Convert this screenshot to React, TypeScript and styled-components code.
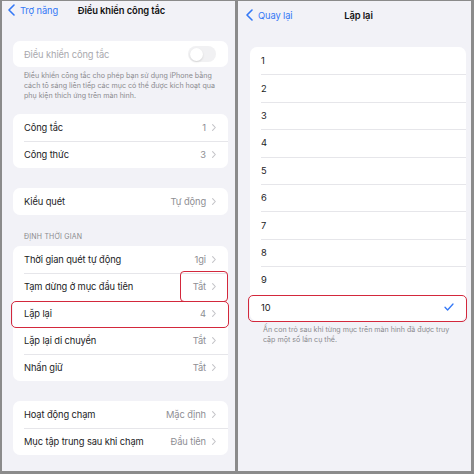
import { createGlobalStyle, styled } from "styled-components";

const BLUE = "#3478f6";
const MARK = "#d3283c";

const GlobalStyle = createGlobalStyle`
  * { box-sizing: border-box; }
  html, body {
    margin: 0;
    padding: 0;
    background: #8b8b8b;
  }
  body {
    font-family: Inter, "Noto Sans", "Liberation Sans", sans-serif;
    -webkit-font-smoothing: antialiased;
  }
`;

const Frame = styled.div`
  width: 474px;
  height: 474px;
  display: flex;
  gap: 3px;
  padding: 1px 3px 3px 2px;
  background: #8b8b8b;
`;

const Screen = styled.section`
  flex: 1;
  display: flex;
  flex-direction: column;
  background: #f2f2f7;
  overflow: hidden;
`;

const Nav = styled.header<{ $h: number; $pl: number }>`
  height: ${(p) => p.$h}px;
  display: grid;
  grid-template-columns: 1fr auto 1fr;
  align-items: center;
  padding-left: ${(p) => p.$pl}px;
`;

const Back = styled.span`
  display: flex;
  align-items: center;
  gap: 5px;
  color: ${BLUE};
  font-size: 9.3px;
  letter-spacing: -0.1px;
`;

const Title = styled.span`
  font-size: 9.4px;
  font-weight: 600;
  letter-spacing: -0.1px;
  color: #111;
`;

const Body = styled.div<{ $pl: number; $pr: number; $pt: number }>`
  display: flex;
  flex-direction: column;
  padding: ${(p) => p.$pt}px ${(p) => p.$pr}px 0 ${(p) => p.$pl}px;
`;

const Card = styled.div<{ $mt?: number }>`
  background: #fff;
  border-radius: 7px;
  margin-top: ${(p) => p.$mt ?? 0}px;
`;

const Row = styled.div<{ $h?: number; $marked?: boolean }>`
  position: relative;
  height: ${(p) => p.$h ?? 27}px;
  display: flex;
  align-items: center;
  padding: 0 12px 0 11px;
  font-size: 9.3px;
  letter-spacing: -0.1px;
  color: #1c1c1e;

  & + &::before {
    content: "";
    position: absolute;
    top: 0;
    left: 11px;
    right: 0;
    height: 1px;
    background: #e6e6ea;
  }

  ${(p) =>
    p.$marked &&
    `
    &::after {
      content: "";
      position: absolute;
      inset: 1px -1px -1px -2px;
      border: 1.5px solid ${MARK};
      border-radius: 5px;
    }
  `}
`;

const Label = styled.span<{ $muted?: boolean }>`
  flex: 1;
  color: ${(p) => (p.$muted ? "#a9a9ae" : "#1c1c1e")};
`;

const Value = styled.span<{ $marked?: boolean }>`
  position: relative;
  display: flex;
  align-items: center;
  gap: 6px;
  color: #8e8e93;

  ${(p) =>
    p.$marked &&
    `
    &::after {
      content: "";
      position: absolute;
      inset: -10px -12px -10px -13px;
      border: 1.5px solid ${MARK};
      border-radius: 4px;
    }
  `}
`;

const Note = styled.p<{ $mt: number; $pl: number }>`
  margin: ${(p) => p.$mt}px 0 0;
  padding-left: ${(p) => p.$pl}px;
  font-size: 7.1px;
  line-height: 10px;
  color: #8a8a8e;
`;

const SectionHead = styled.div`
  margin-top: 17px;
  padding-left: 11px;
  height: 10px;
  line-height: 10px;
  font-size: 7px;
  letter-spacing: 0.2px;
  color: #8a8a8e;
`;

const Switch = styled.span`
  position: relative;
  width: 28px;
  height: 16px;
  border-radius: 8px;
  background: #ededef;
  opacity: 0.75;

  &::after {
    content: "";
    position: absolute;
    top: 1.5px;
    left: 1.5px;
    width: 13px;
    height: 13px;
    border-radius: 50%;
    background: #fff;
    box-shadow: 0 1px 2px rgba(0, 0, 0, 0.18);
  }
`;

const Chevron = () => (
  <svg width="4" height="7" viewBox="0 0 4 7">
    <polyline points="0.6,0.6 3.3,3.5 0.6,6.4" fill="none" stroke="#c4c4c8" strokeWidth="1.1" strokeLinecap="round" strokeLinejoin="round" />
  </svg>
);

const BackChevron = () => (
  <svg width="7" height="12" viewBox="0 0 7 12">
    <polyline points="6,1 1,6 6,11" fill="none" stroke={BLUE} strokeWidth="1.6" strokeLinecap="round" strokeLinejoin="round" />
  </svg>
);

const Check = () => (
  <svg width="10" height="8" viewBox="0 0 10 8">
    <polyline points="1,4.2 3.6,7 9,1" fill="none" stroke={BLUE} strokeWidth="1.3" strokeLinecap="round" strokeLinejoin="round" />
  </svg>
);

interface Setting {
  label: string;
  value: string;
  markRow?: boolean;
  markValue?: boolean;
}

const SettingRows = ({ items }: { items: Setting[] }) => (
  <>
    {items.map((it) => (
      <Row key={it.label} $marked={it.markRow}>
        <Label>{it.label}</Label>
        <Value $marked={it.markValue}>
          {it.value}
          <Chevron />
        </Value>
      </Row>
    ))}
  </>
);

const timing: Setting[] = [
  { label: "Thời gian quét tự động", value: "1gi" },
  { label: "Tạm dừng ở mục đầu tiên", value: "Tắt", markValue: true },
  { label: "Lặp lại", value: "4", markRow: true },
  { label: "Lặp lại di chuyển", value: "Tắt" },
  { label: "Nhấn giữ", value: "Tắt" },
];

const repeatOptions = ["1", "2", "3", "4", "5", "6", "7", "8", "9", "10"];

export default function App() {
  const selected = "10";
  return (
    <>
      <GlobalStyle />
      <Frame>
        <Screen>
          <Nav $h={18} $pl={6}>
            <Back>
              <BackChevron />
              Trợ năng
            </Back>
            <Title>Điều khiển công tắc</Title>
            <span />
          </Nav>
          <Body $pl={11} $pr={7} $pt={22}>
            <Card>
              <Row $h={26}>
                <Label $muted>Điều khiển công tắc</Label>
                <Switch />
              </Row>
            </Card>
            <Note $mt={4} $pl={11}>
              Điều khiển công tắc cho phép bạn sử dụng iPhone bằng
              <br />
              cách tô sáng liên tiếp các mục có thể được kích hoạt qua
              <br />
              phụ kiện thích ứng trên màn hình.
            </Note>
            <Card $mt={13}>
              <SettingRows
                items={[
                  { label: "Công tắc", value: "1" },
                  { label: "Công thức", value: "3" },
                ]}
              />
            </Card>
            <Card $mt={20}>
              <SettingRows items={[{ label: "Kiểu quét", value: "Tự động" }]} />
            </Card>
            <SectionHead>ĐỊNH THỜI GIAN</SectionHead>
            <Card $mt={4}>
              <SettingRows items={timing} />
            </Card>
            <Card $mt={20}>
              <SettingRows
                items={[
                  { label: "Hoạt động chạm", value: "Mặc định" },
                  { label: "Mục tập trung sau khi chạm", value: "Đầu tiên" },
                ]}
              />
            </Card>
          </Body>
        </Screen>

        <Screen>
          <Nav $h={28} $pl={8}>
            <Back>
              <BackChevron />
              Quay lại
            </Back>
            <Title>Lặp lại</Title>
            <span />
          </Nav>
          <Body $pl={12} $pr={5} $pt={18}>
            <Card>
              {repeatOptions.map((n) => (
                <Row key={n} $h={27.4} $marked={n === selected}>
                  <Label>{n}</Label>
                  {n === selected && <Check />}
                </Row>
              ))}
            </Card>
            <Note $mt={4} $pl={13}>
              Ấn con trỏ sau khi từng mục trên màn hình đã được truy
              <br />
              cập một số lần cụ thể.
            </Note>
          </Body>
        </Screen>
      </Frame>
    </>
  );
}
